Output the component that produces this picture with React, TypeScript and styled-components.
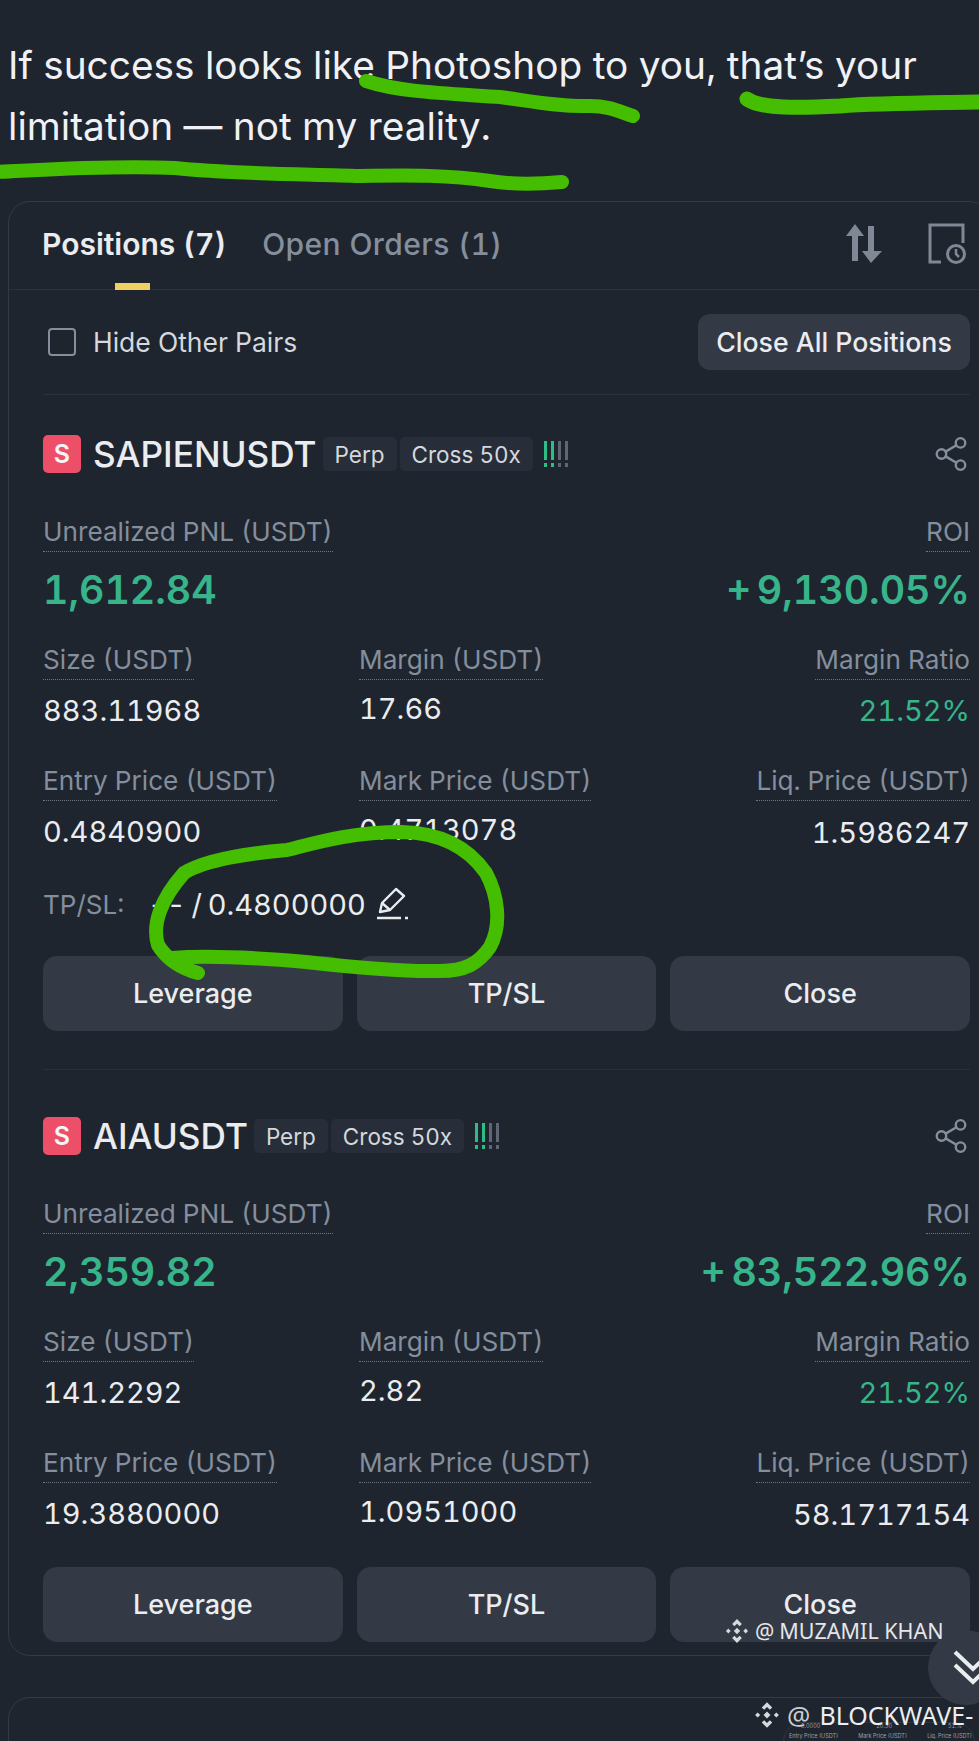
import React from "react";
import styled, { createGlobalStyle } from "styled-components";
import { Share2 } from "lucide-react";

const GlobalStyle = createGlobalStyle`
  html, body {
    margin: 0;
    padding: 0;
    background: #1e252f;
    overflow: hidden;
  }
  body {
    font-family: Inter, "Liberation Sans", sans-serif;
    font-variant-numeric: tabular-nums;
    color: #eaecef;
  }
`;

interface PositionData {
  symbol: string;
  pnl: string;
  roi: string;
  size: string;
  margin: string;
  marginRatio: string;
  entry: string;
  mark: string;
  liq: string;
  tpsl?: string;
}

const positions: PositionData[] = [
  {
    symbol: "SAPIENUSDT",
    pnl: "1,612.84",
    roi: "+ 9,130.05%",
    size: "883.11968",
    margin: "17.66",
    marginRatio: "21.52%",
    entry: "0.4840900",
    mark: "0.4713078",
    liq: "1.5986247",
    tpsl: "-- / 0.4800000",
  },
  {
    symbol: "AIAUSDT",
    pnl: "2,359.82",
    roi: "+ 83,522.96%",
    size: "141.2292",
    margin: "2.82",
    marginRatio: "21.52%",
    entry: "19.3880000",
    mark: "1.0951000",
    liq: "58.1717154",
  },
];

function BinanceMark({ size }: { size: number }) {
  return (
    <svg width={size} height={size} viewBox="0 0 24 24" fill="#d5d8dc">
      <path d="M12 1 16.5 5.5 14.4 7.6 12 5.2 9.6 7.6 7.5 5.5Z" />
      <path d="M12 23 7.5 18.5 9.6 16.4 12 18.8 14.4 16.4 16.5 18.5Z" />
      <path d="M12 9 15 12 12 15 9 12Z" />
      <path d="M4 9.8 6.2 12 4 14.2 1.8 12Z" />
      <path d="M20 9.8 22.2 12 20 14.2 17.8 12Z" />
    </svg>
  );
}

function SortIcon() {
  return (
    <svg width="38" height="40" viewBox="0 0 38 40" fill="#7f8894">
      <path d="M10 0 19 12H13V37H7V12H1Z" />
      <path d="M22 2H28V27H36L25 39 16 27H22Z" transform="translate(1 0)" />
    </svg>
  );
}

function HistoryIcon() {
  return (
    <svg width="38" height="42" viewBox="0 0 38 42" fill="none" stroke="#7f8894" strokeWidth="3">
      <path d="M13 39H2V2H35V20" />
      <circle cx="28" cy="31" r="8.5" />
      <path d="M28 26V31L31 34" strokeWidth="2.5" />
    </svg>
  );
}

function PencilIcon() {
  return (
    <svg width="32" height="34" viewBox="0 0 32 34" fill="none" stroke="#eaecef" strokeWidth="2.4">
      <path d="M3 25 5 16 19 2 27 9 13 23Z" strokeLinejoin="round" />
      <path d="M5 16 13 23" />
      <path d="M0 31H24M28 31H31" />
    </svg>
  );
}

function ChevronsIcon() {
  return (
    <svg width="40" height="38" viewBox="0 0 40 38" fill="none" stroke="#eaecef" strokeWidth="4">
      <path d="M2 3 20 20 38 3" />
      <path d="M2 16 20 33 38 16" />
    </svg>
  );
}

function Position({ data }: { data: PositionData }) {
  return (
    <PositionBlock>
      <SymbolRow>
        <CoinBadge>S</CoinBadge>
        <SymbolName>{data.symbol}</SymbolName>
        <Tag>Perp</Tag>
        <Tag>Cross 50x</Tag>
        <RiskBars>
          <RiskBar $on />
          <RiskBar $on />
          <RiskBar />
          <RiskBar />
        </RiskBars>
        <ShareButton>
          <Share2 size={38} strokeWidth={1.5} />
        </ShareButton>
      </SymbolRow>

      <PnlRow>
        <Stat>
          <Label>Unrealized PNL (USDT)</Label>
          <BigValue>{data.pnl}</BigValue>
        </Stat>
        <Stat $right>
          <Label>ROI</Label>
          <BigValue>{data.roi}</BigValue>
        </Stat>
      </PnlRow>

      <StatGrid>
        <Stat>
          <Label>Size (USDT)</Label>
          <Value>{data.size}</Value>
        </Stat>
        <Stat>
          <Label>Margin (USDT)</Label>
          <Value $lift>{data.margin}</Value>
        </Stat>
        <Stat $right>
          <Label>Margin Ratio</Label>
          <Value $green>{data.marginRatio}</Value>
        </Stat>
        <Stat>
          <Label>Entry Price (USDT)</Label>
          <Value>{data.entry}</Value>
        </Stat>
        <Stat>
          <Label>Mark Price (USDT)</Label>
          <Value $lift>{data.mark}</Value>
        </Stat>
        <Stat $right>
          <Label>Liq. Price (USDT)</Label>
          <Value $drop>{data.liq}</Value>
        </Stat>
      </StatGrid>

      {data.tpsl && (
        <TpSlRow>
          <TpSlLabel>TP/SL:</TpSlLabel>
          <TpSlValue>{data.tpsl}</TpSlValue>
          <PencilIcon />
        </TpSlRow>
      )}

      <ButtonRow $withTpSl={!!data.tpsl}>
        <ActionButton>Leverage</ActionButton>
        <ActionButton>TP/SL</ActionButton>
        <ActionButton>Close</ActionButton>
      </ButtonRow>
    </PositionBlock>
  );
}

export default function App() {
  return (
    <Page>
      <GlobalStyle />
      <Headline>
        If success looks like Photoshop to you, that’s your
        <br />
        limitation — not my reality.
      </Headline>

      <Card>
        <TabBar>
          <Tab $active>
            Positions (7)
            <TabMarker />
          </Tab>
          <Tab>Open Orders (1)</Tab>
          <TabIcons>
            <SortIcon />
            <HistoryIcon />
          </TabIcons>
        </TabBar>

        <Toolbar>
          <HideLabel>
            <CheckBox />
            Hide Other Pairs
          </HideLabel>
          <CloseAll>Close All Positions</CloseAll>
        </Toolbar>

        {positions.map((p) => (
          <Position key={p.symbol} data={p} />
        ))}
      </Card>

      <NextCard />

      <Scribbles viewBox="0 0 979 1741">
        <path d="M366 81C400 92 440 93 500 97C530 101 560 107 590 106C610 106 620 112 633 116" strokeWidth="14" />
        <path d="M747 99C760 109 800 108 840 106C880 103 930 103 985 102" strokeWidth="15" />
        <path d="M-5 172C40 170 110 165 175 168C230 174 300 174 360 176C410 175 450 175 490 181C515 185 540 184 562 182" strokeWidth="14" />
        <path
          d="M198 973C180 968 166 958 158 945C152 925 160 900 184 873C205 860 250 853 287 850C315 843 350 832 402 832C445 833 470 850 486 873C498 895 502 925 490 947C478 964 465 971 440 971C400 972 350 967 306 962C260 958 210 955 172 958"
          strokeWidth="14"
        />
      </Scribbles>

      <MiniPreview>
        <MiniRow $inset>
          <span>0.0000</span>
          <span>20.30</span>
          <span>51.%</span>
        </MiniRow>
        <MiniRow>
          <span>Entry Price (USDT)</span>
          <span>Mark Price (USDT)</span>
          <span>Liq. Price (USDT)</span>
        </MiniRow>
      </MiniPreview>

      <WatermarkTop>
        <BinanceMark size={26} />
        <span>@</span>
        <span>MUZAMIL KHAN</span>
      </WatermarkTop>

      <ScrollButton>
        <ChevronsIcon />
      </ScrollButton>

      <WatermarkBottom>
        <BinanceMark size={28} />
        <AtSign>@</AtSign>
        <span>BLOCKWAVE-</span>
      </WatermarkBottom>
    </Page>
  );
}

const Page = styled.div`
  position: relative;
  width: 979px;
  height: 1741px;
  overflow: hidden;
  background: #1e252f;
`;

const Headline = styled.h1`
  margin: 0;
  padding: 34px 0 0 8px;
  height: 167px;
  box-sizing: border-box;
  font-size: 38.8px;
  font-weight: 400;
  line-height: 61px;
  color: #f0f1f5;
  white-space: nowrap;
`;

const Card = styled.div`
  margin: 34px -12px 0 8px;
  padding: 0 20px 13px 0;
  border: 1px solid #323a45;
  border-radius: 22px;
`;

const TabBar = styled.div`
  display: flex;
  align-items: center;
  height: 84px;
  padding: 0 0 3px 33px;
  margin-right: -20px;
  border-bottom: 1px solid #2b323c;
`;

const Tab = styled.div<{ $active?: boolean }>`
  position: relative;
  margin-right: 36px;
  font-size: 30px;
  font-weight: ${(p) => (p.$active ? 600 : 500)};
  letter-spacing: ${(p) => (p.$active ? 0 : 0.4)}px;
  color: ${(p) => (p.$active ? "#eaecef" : "#848e9c")};
`;

const TabMarker = styled.span`
  position: absolute;
  left: 73px;
  bottom: -28px;
  width: 35px;
  height: 7px;
  background: #f0cf62;
`;

const TabIcons = styled.div`
  display: flex;
  align-items: center;
  gap: 45px;
  margin-left: auto;
  margin-right: 24px;
`;

const Toolbar = styled.div`
  display: flex;
  align-items: center;
  justify-content: space-between;
  height: 105px;
  margin-left: 34px;
  box-sizing: border-box;
  border-bottom: 1px solid #2b323c;
`;

const HideLabel = styled.label`
  display: flex;
  align-items: center;
  gap: 17px;
  margin-left: 5px;
  font-size: 26.5px;
  line-height: 34px;
  color: #d5d8dc;
`;

const CheckBox = styled.span`
  width: 24px;
  height: 24px;
  border: 2px solid #848e9c;
  border-radius: 4px;
`;

const CloseAll = styled.button`
  width: 272px;
  height: 56px;
  padding: 0;
  border: 0;
  border-radius: 12px;
  background: #333945;
  color: #eaecef;
  font-family: inherit;
  font-size: 26.7px;
  font-weight: 500;
`;

const PositionBlock = styled.div`
  margin-left: 34px;
  padding-top: 40px;

  & + & {
    margin-top: 38px;
    padding-top: 47px;
    border-top: 1px solid #29303a;
  }
`;

const SymbolRow = styled.div`
  display: flex;
  align-items: center;
  height: 38px;
`;

const CoinBadge = styled.div`
  display: flex;
  align-items: center;
  justify-content: center;
  width: 38px;
  height: 38px;
  margin-right: 12px;
  border-radius: 5px;
  background: #ee4f68;
  color: #f5f5f5;
  font-size: 25px;
  font-weight: 600;
`;

const SymbolName = styled.div`
  margin-right: 6px;
  font-size: 35.2px;
  font-weight: 500;
  color: #eaecef;
`;

const Tag = styled.div`
  display: flex;
  align-items: center;
  height: 34px;
  margin-right: 3px;
  padding: 0 12px;
  border-radius: 5px;
  background: #272e39;
  font-size: 22.5px;
  color: #d5d8dc;
`;

const RiskBars = styled.div`
  display: flex;
  gap: 4px;
  margin-left: 8px;
`;

const RiskBar = styled.span<{ $on?: boolean }>`
  width: 3px;
  height: 26px;
  background: linear-gradient(
    to bottom,
    ${(p) => (p.$on ? "#2ebd85" : "#5e6673")} 0 74%,
    transparent 74% 84%,
    ${(p) => (p.$on ? "#2ebd85" : "#5e6673")} 84%
  );
`;

const ShareButton = styled.div`
  display: flex;
  margin-left: auto;
  color: #848e9c;
`;

const PnlRow = styled.div`
  display: flex;
  justify-content: space-between;
  margin-top: 43px;
`;

const Stat = styled.div<{ $right?: boolean }>`
  display: flex;
  flex-direction: column;
  align-items: ${(p) => (p.$right ? "flex-end" : "flex-start")};
`;

const Label = styled.span`
  padding-bottom: 3px;
  border-bottom: 1px dotted #6e7683;
  font-size: 26.2px;
  line-height: 32px;
  color: #848e9c;
`;

const BigValue = styled.div`
  margin-top: 14px;
  font-size: 39.3px;
  font-weight: 600;
  line-height: 47px;
  word-spacing: -5px;
  color: #37b48a;
`;

const StatGrid = styled.div`
  display: grid;
  grid-template-columns: 316px 1fr auto;
  row-gap: 35px;
  margin-top: 31px;
`;

const Value = styled.div<{ $green?: boolean; $lift?: boolean; $drop?: boolean }>`
  margin-top: ${(p) => (p.$lift ? 10 : p.$drop ? 13 : 12)}px;
  font-size: 29px;
  line-height: 38px;
  color: ${(p) => (p.$green ? "#37b48a" : "#eaecef")};
`;

const TpSlRow = styled.div`
  display: flex;
  align-items: center;
  height: 36px;
  margin-top: 34px;
`;

const TpSlLabel = styled.span`
  width: 105px;
  font-size: 26px;
  color: #848e9c;
`;

const TpSlValue = styled.span`
  margin-right: 11px;
  font-size: 29px;
  word-spacing: -2px;
  color: #eaecef;
`;

const ButtonRow = styled.div<{ $withTpSl: boolean }>`
  display: grid;
  grid-template-columns: repeat(3, 1fr);
  gap: 14px;
  margin-top: ${(p) => (p.$withTpSl ? 34 : 33)}px;
`;

const ActionButton = styled.button`
  height: 75px;
  padding: 0;
  border: 0;
  border-radius: 14px;
  background: #333945;
  color: #eaecef;
  font-family: inherit;
  font-size: 27px;
  font-weight: 500;
`;

const NextCard = styled.div`
  height: 120px;
  margin: 41px -12px 0 8px;
  border: 1px solid #323a45;
  border-radius: 22px;
`;

const Scribbles = styled.svg`
  position: absolute;
  top: 0;
  left: 0;
  width: 979px;
  height: 1741px;
  fill: none;
  stroke: #45bd00;
  stroke-linecap: round;
  stroke-linejoin: round;
  pointer-events: none;
`;

const MiniPreview = styled.div`
  position: absolute;
  left: 783px;
  top: 1722px;
  display: flex;
  flex-direction: column;
  gap: 4px;
  width: 192px;
  height: 40px;
  padding: 0 2px 0 5px;
  box-sizing: border-box;
  border: 1px solid #2f3641;
  border-radius: 20px;
  font-size: 5.5px;
  line-height: 6px;
  color: #9aa1ab;
`;

const MiniRow = styled.div<{ $inset?: boolean }>`
  display: flex;
  justify-content: space-between;
  padding: 0 ${(p) => (p.$inset ? 10 : 0)}px 0 ${(p) => (p.$inset ? 12 : 0)}px;
  white-space: nowrap;
`;

const WatermarkTop = styled.div`
  position: absolute;
  left: 724px;
  top: 1617px;
  display: flex;
  align-items: center;
  gap: 5px;
  font-family: "Noto Sans", sans-serif;
  font-size: 21.5px;
  line-height: 28px;
  color: #e4e6e9;
  white-space: nowrap;
`;

const ScrollButton = styled.div`
  position: absolute;
  left: 928px;
  top: 1630px;
  display: flex;
  align-items: center;
  width: 75px;
  height: 75px;
  padding-left: 25px;
  box-sizing: border-box;
  border-radius: 50%;
  background: #333945;
`;

const WatermarkBottom = styled.div`
  position: absolute;
  left: 753px;
  top: 1694px;
  display: flex;
  align-items: center;
  font-family: "Noto Sans", sans-serif;
  font-size: 25px;
  line-height: 42px;
  color: #eceef0;
  white-space: nowrap;
`;

const AtSign = styled.span`
  margin: 0 9px 0 6px;
  font-size: 26px;
  color: #c9ccd1;
`;
